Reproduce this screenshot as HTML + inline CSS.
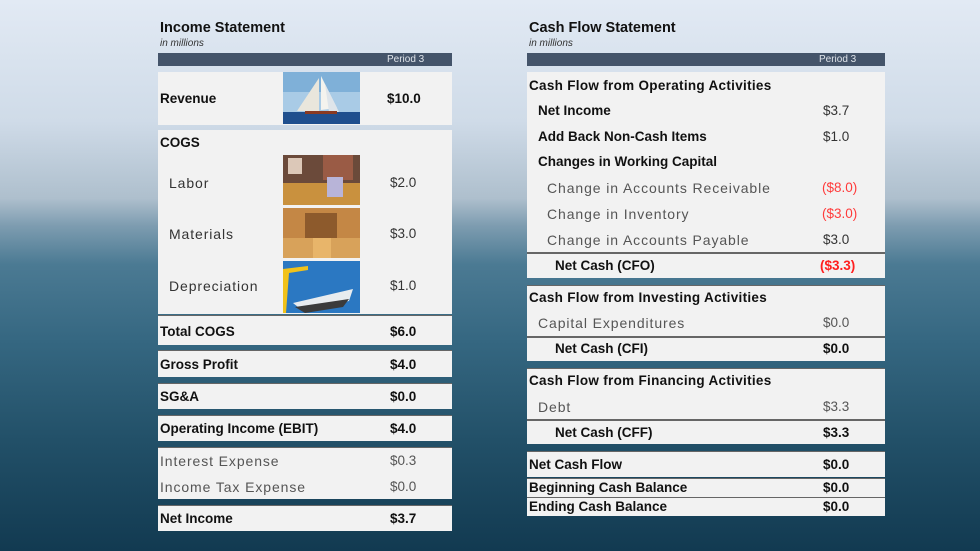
<!DOCTYPE html>
<html><head><meta charset="utf-8"><style>
*{margin:0;padding:0;box-sizing:border-box}
body{width:980px;height:551px;overflow:hidden;position:relative;font-family:"Liberation Sans",sans-serif;
background:linear-gradient(180deg,#e2eaf4 0%,#cfdbe8 22%,#aebfcd 36%,#7d9cb0 41%,#4b7a93 48%,#356781 62%,#225068 80%,#123a51 100%)}
.a{position:absolute}
.box{position:absolute;background:#f2f2f2;border-top:1.5px solid #666}
.t{position:absolute;font-size:13.5px;color:#111;white-space:nowrap;line-height:16px}
.b{font-weight:bold}
.g{color:#555}
.w{font-size:14px;letter-spacing:0.9px;top:auto}
.r{color:#ff3b3b}
.hdr{position:absolute;background:#44546a;height:13px;color:#dfe4ea;font-size:10px;line-height:13px}
h1{position:absolute;font-size:14.5px;font-weight:bold;color:#111}
.sub{position:absolute;font-size:10px;font-style:italic;color:#333}
.ln{position:absolute;height:1.5px;background:#666}
</style></head><body>

<h1 style="left:160px;top:20px">Income Statement</h1>
<div class="sub" style="left:160px;top:38px">in millions</div>
<div class="hdr" style="left:158px;top:53px;width:294px"><span style="position:absolute;left:229px">Period 3</span></div>

<div class="box" style="left:158px;top:72px;width:294px;height:53px;border-top:none"></div>
<svg class="a" style="left:283px;top:72px" width="77" height="52" viewBox="0 0 77 52">
<rect width="77" height="40" fill="#7fb0d8"/><rect y="20" width="77" height="20" fill="#a9cbe6"/><rect y="40" width="77" height="12" fill="#1f4f8e"/>
<polygon points="36,6 36,39 14,39" fill="#e9e6dc"/><polygon points="38,4 54,36 38,38" fill="#f4f3ee"/><polygon points="42,12 56,40 46,40" fill="#dfe5ea"/>
<rect x="22" y="39" width="32" height="3" fill="#8a3a22"/></svg>
<div class="t b" style="left:160px;top:91px">Revenue</div>
<div class="t b" style="left:387px;top:91px">$10.0</div>

<div class="box" style="left:158px;top:130px;width:294px;height:184px;border-top:none"></div>
<div class="t b" style="left:160px;top:135px">COGS</div>
<svg class="a" style="left:283px;top:155px" width="77" height="50"><rect width="77" height="50" fill="#6b4a3a"/><rect y="28" width="77" height="22" fill="#c9913e"/><rect x="40" width="30" height="25" fill="#9a5b45"/><rect x="44" y="22" width="16" height="20" fill="#b8b4d8"/><rect x="5" y="3" width="14" height="16" fill="#dcc8b8"/></svg>
<div class="t w" style="left:169px;top:175px;color:#333">Labor</div>
<div class="t" style="left:390px;top:175px;color:#333">$2.0</div>
<svg class="a" style="left:283px;top:208px" width="77" height="50"><rect width="77" height="50" fill="#c48745"/><rect x="22" y="5" width="32" height="25" fill="#8d5a2c"/><rect y="30" width="77" height="20" fill="#d8a25a"/><rect x="30" y="30" width="18" height="20" fill="#e8b56a"/></svg>
<div class="t w" style="left:169px;top:226px;color:#333">Materials</div>
<div class="t" style="left:390px;top:226px;color:#333">$3.0</div>
<svg class="a" style="left:283px;top:261px" width="77" height="52"><rect width="77" height="52" fill="#2b78c2"/><polygon points="0,8 25,5 25,9 6,12 3,52 0,52" fill="#f1c21a"/><polygon points="10,42 70,28 66,40 20,50" fill="#e8ecef"/><polygon points="12,46 66,38 60,46 22,52" fill="#3b3b3b"/></svg>
<div class="t w" style="left:169px;top:278px;color:#333">Depreciation</div>
<div class="t" style="left:390px;top:278px;color:#333">$1.0</div>

<div class="box" style="left:158px;top:315px;width:294px;height:30px"></div>
<div class="t b" style="left:160px;top:324px">Total COGS</div>
<div class="t b" style="left:390px;top:324px">$6.0</div>
<div class="box" style="left:158px;top:350px;width:294px;height:27px"></div>
<div class="t b" style="left:160px;top:357px">Gross Profit</div>
<div class="t b" style="left:390px;top:357px">$4.0</div>
<div class="box" style="left:158px;top:383px;width:294px;height:26px"></div>
<div class="t b" style="left:160px;top:389px">SG&amp;A</div>
<div class="t b" style="left:390px;top:389px">$0.0</div>
<div class="box" style="left:158px;top:415px;width:294px;height:26px"></div>
<div class="t b" style="left:160px;top:421px">Operating Income (EBIT)</div>
<div class="t b" style="left:390px;top:421px">$4.0</div>
<div class="box" style="left:158px;top:447px;width:294px;height:52px"></div>
<div class="t g w" style="left:160px;top:453px">Interest Expense</div>
<div class="t g" style="left:390px;top:453px">$0.3</div>
<div class="t g w" style="left:160px;top:479px">Income Tax Expense</div>
<div class="t g" style="left:390px;top:479px">$0.0</div>
<div class="box" style="left:158px;top:505px;width:294px;height:26px"></div>
<div class="t b" style="left:160px;top:511px">Net Income</div>
<div class="t b" style="left:390px;top:511px">$3.7</div>

<h1 style="left:529px;top:20px">Cash Flow Statement</h1>
<div class="sub" style="left:529px;top:38px">in millions</div>
<div class="hdr" style="left:527px;top:53px;width:358px"><span style="position:absolute;left:292px">Period 3</span></div>

<div class="box" style="left:527px;top:72px;width:358px;height:206px;border-top:none"></div>
<div class="ln" style="left:527px;top:252px;width:358px"></div>
<div class="t b" style="left:529px;top:78px;letter-spacing:0.3px">Cash Flow from Operating Activities</div>
<div class="t b" style="left:538px;top:103px">Net Income</div><div class="t g" style="left:823px;top:103px;color:#333">$3.7</div>
<div class="t b" style="left:538px;top:129px">Add Back Non-Cash Items</div><div class="t" style="left:823px;top:129px;color:#333">$1.0</div>
<div class="t b" style="left:538px;top:154px">Changes in Working Capital</div>
<div class="t g w" style="left:547px;top:180px">Change in Accounts Receivable</div><div class="t r" style="left:822px;top:180px">($8.0)</div>
<div class="t g w" style="left:547px;top:206px">Change in Inventory</div><div class="t r" style="left:822px;top:206px">($3.0)</div>
<div class="t g w" style="left:547px;top:232px">Change in Accounts Payable</div><div class="t" style="left:823px;top:232px;color:#333">$3.0</div>
<div class="t b" style="left:555px;top:258px">Net Cash (CFO)</div><div class="t b" style="left:820px;top:258px;color:#ff1f1f">($3.3)</div>

<div class="box" style="left:527px;top:285px;width:358px;height:76px"></div>
<div class="ln" style="left:527px;top:336px;width:358px"></div>
<div class="t b" style="left:529px;top:290px;letter-spacing:0.3px">Cash Flow from Investing Activities</div>
<div class="t g w" style="left:538px;top:315px">Capital Expenditures</div><div class="t g" style="left:823px;top:315px">$0.0</div>
<div class="t b" style="left:555px;top:341px">Net Cash (CFI)</div><div class="t b" style="left:823px;top:341px">$0.0</div>

<div class="box" style="left:527px;top:368px;width:358px;height:76px"></div>
<div class="ln" style="left:527px;top:419px;width:358px"></div>
<div class="t b" style="left:529px;top:373px;letter-spacing:0.3px">Cash Flow from Financing Activities</div>
<div class="t g w" style="left:538px;top:399px">Debt</div><div class="t g" style="left:823px;top:399px">$3.3</div>
<div class="t b" style="left:555px;top:425px">Net Cash (CFF)</div><div class="t b" style="left:823px;top:425px">$3.3</div>

<div class="box" style="left:527px;top:451px;width:358px;height:26px"></div>
<div class="t b" style="left:529px;top:457px">Net Cash Flow</div><div class="t b" style="left:823px;top:457px">$0.0</div>
<div class="box" style="left:527px;top:478px;width:358px;height:19px"></div>
<div class="t b" style="left:529px;top:480px">Beginning Cash Balance</div><div class="t b" style="left:823px;top:480px">$0.0</div>
<div class="box" style="left:527px;top:497px;width:358px;height:19px"></div>
<div class="t b" style="left:529px;top:499px">Ending Cash Balance</div><div class="t b" style="left:823px;top:499px">$0.0</div>
</body></html>
